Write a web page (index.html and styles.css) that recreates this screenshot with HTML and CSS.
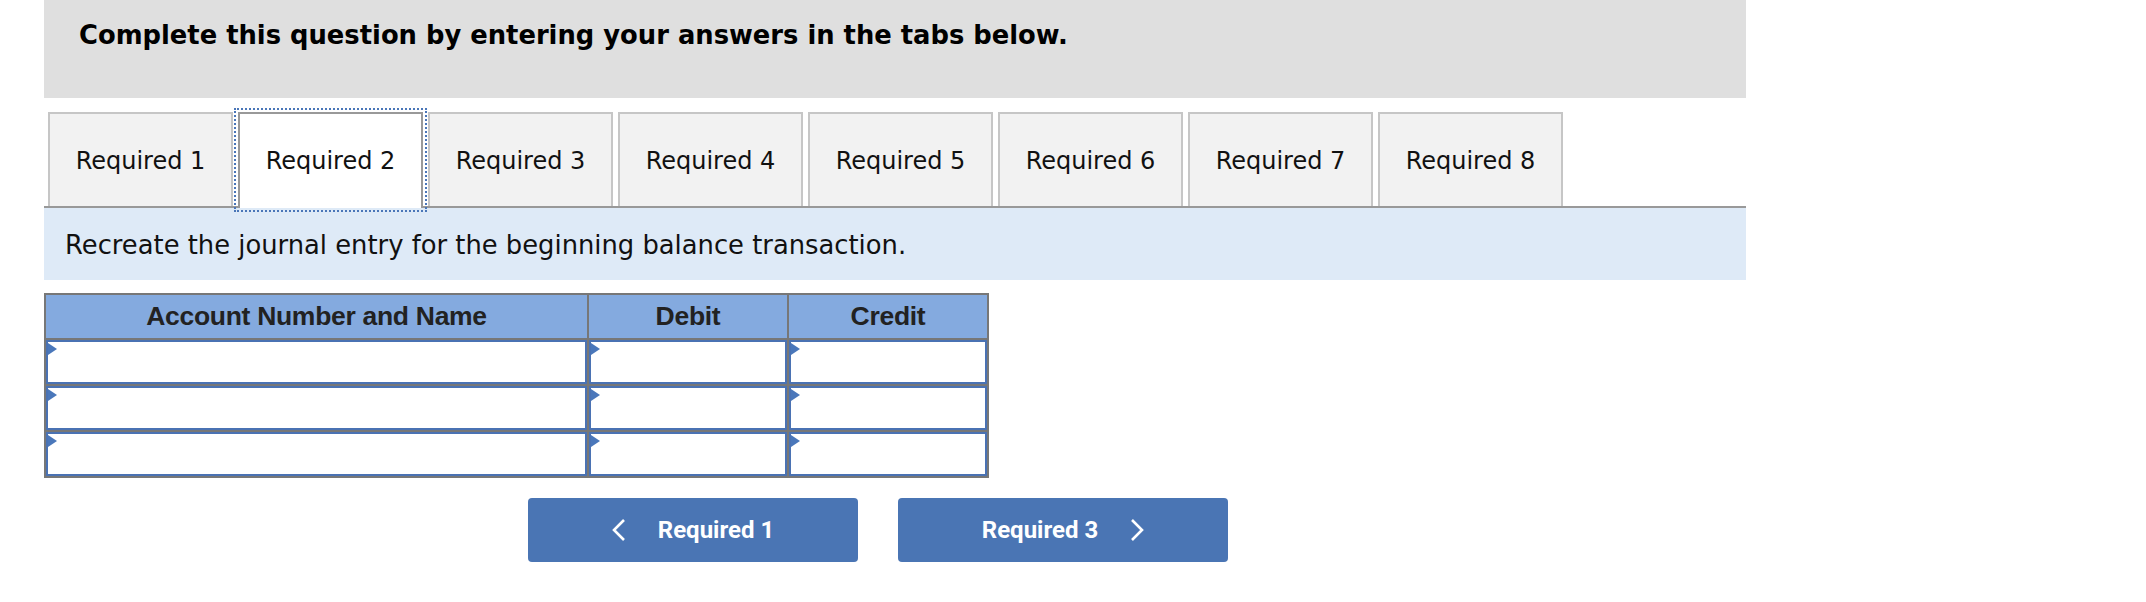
FILE: index.html
```html
<!DOCTYPE html>
<html>
<head>
<meta charset="utf-8">
<link rel="stylesheet" href="styles.css">
</head>
<body>
<div class="page">
  <div class="header">
    <h1 class="title">Complete this question by entering your answers in the tabs below.</h1>
  </div>
  <div class="tabs">
    <div class="tab">Required 1</div>
    <div class="tab active">Required 2</div>
    <div class="tab">Required 3</div>
    <div class="tab">Required 4</div>
    <div class="tab">Required 5</div>
    <div class="tab">Required 6</div>
    <div class="tab">Required 7</div>
    <div class="tab">Required 8</div>
  </div>
  <div class="instruction">Recreate the journal entry for the beginning balance transaction.</div>
  <div class="journal">
    <div class="th">Account Number and Name</div>
    <div class="th">Debit</div>
    <div class="th">Credit</div>
    <div class="td"></div><div class="td"></div><div class="td"></div>
    <div class="td"></div><div class="td"></div><div class="td"></div>
    <div class="td"></div><div class="td"></div><div class="td"></div>
  </div>
  <div class="nav">
    <button class="navbtn">
      <svg class="chev" width="14" height="22" viewBox="0 0 14 22"><polyline points="12,1 2,11 12,21" fill="none" stroke="#fff" stroke-width="2.6"/></svg>
      <span>Required 1</span>
    </button>
    <button class="navbtn">
      <span>Required 3</span>
      <svg class="chev" width="14" height="22" viewBox="0 0 14 22"><polyline points="2,1 12,11 2,21" fill="none" stroke="#fff" stroke-width="2.6"/></svg>
    </button>
  </div>
</div>
</body>
</html>
```
FILE: styles.css
```css
html, body {
  margin: 0;
  padding: 0;
  background: #fff;
}
.page {
  width: 1702px;
  margin-left: 44px;
  display: flex;
  flex-direction: column;
}
.header {
  background: #dfdfdf;
  height: 98px;
  box-sizing: border-box;
  padding: 18px 0 0 35px;
}
.title {
  margin: 0;
  font-family: "DejaVu Sans", Verdana, sans-serif;
  font-weight: bold;
  font-size: 25.8px;
  line-height: 34px;
  color: #000;
}
.tabs {
  margin-top: 14px;
  display: flex;
  gap: 5px;
  padding-left: 4px;
  border-bottom: 2px solid #999;
  height: 94px;
}
.tab {
  width: 185px;
  height: 94px;
  box-sizing: border-box;
  border: 2px solid #c6c6c6;
  border-bottom: none;
  background: #f2f2f2;
  display: flex;
  align-items: center;
  justify-content: center;
  padding-top: 2px;
  font-family: "DejaVu Sans", Verdana, sans-serif;
  font-size: 24px;
  color: #111;
}
.tab.active {
  background: #fff;
  border-color: #999;
  height: 96px;
  padding-top: 0;
  outline: 2px dotted #4a76b8;
  outline-offset: 2px;
  position: relative;
}
.instruction {
  height: 72px;
  background: #deeaf7;
  display: flex;
  align-items: center;
  padding-left: 21px;
  padding-top: 2px;
  box-sizing: border-box;
  font-family: "DejaVu Sans", Verdana, sans-serif;
  font-size: 25.8px;
  color: #111;
}
.journal {
  margin-top: 13px;
  width: 945px;
  box-sizing: border-box;
  border: 2px solid #777;
  background: #777;
  display: grid;
  grid-template-columns: 541px 198px 198px;
  grid-template-rows: 43px 44px 44px 44px;
  gap: 2px;
}
.th {
  background: #84aadf;
  display: flex;
  align-items: center;
  justify-content: center;
  font-family: "Liberation Sans", Arial, sans-serif;
  font-weight: bold;
  font-size: 26.5px;
  color: #222;
  letter-spacing: -0.3px;
}
.td {
  background: #fff;
  border: 2px solid #4a72b3;
  position: relative;
}
.td::before {
  content: "";
  position: absolute;
  left: 0;
  top: 1px;
  width: 0;
  height: 0;
  border-left: 9px solid #4a77ba;
  border-top: 6px solid transparent;
  border-bottom: 6px solid transparent;
}
.nav {
  margin-top: 20px;
  margin-left: 484px;
  display: flex;
  gap: 40px;
}
.navbtn {
  width: 330px;
  height: 64px;
  background: #4a75b4;
  border: none;
  border-radius: 4px;
  color: #fff;
  display: flex;
  align-items: center;
  justify-content: center;
  gap: 32px;
  font-family: Roboto, "Liberation Sans", sans-serif;
  font-weight: bold;
  font-size: 24px;
  padding: 0;
}
.chev {
  display: block;
}
```
